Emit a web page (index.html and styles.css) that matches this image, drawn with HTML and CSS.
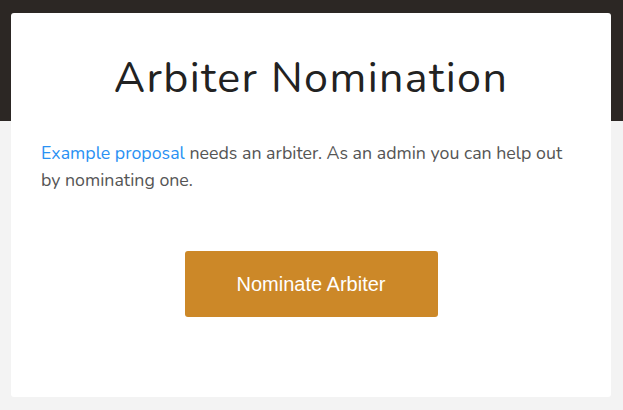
FILE: index.html
```html
<!DOCTYPE html>
<html>
<head>
<meta charset="utf-8">
<link rel="stylesheet" href="styles.css">
</head>
<body>
<div class="card">
  <h1 class="title">Arbiter Nomination</h1>
  <p class="text"><a class="link" href="#">Example proposal</a> needs an arbiter. As an admin you can help out by nominating one.</p>
  <div class="actions">
    <button class="btn">Nominate Arbiter</button>
  </div>
</div>
</body>
</html>
```
FILE: styles.css
```css
html, body {
  margin: 0;
  padding: 0;
}
body {
  width: 623px;
  height: 410px;
  overflow: hidden;
  background: linear-gradient(to bottom, #2c2724 0, #2c2724 121px, #f3f3f3 121px, #f3f3f3 100%);
  font-family: "Nunito", "Lato", "Open Sans", sans-serif;
}
.card {
  margin: 13px 12px 0 11px;
  height: 384px;
  box-sizing: border-box;
  background: #fff;
  border-radius: 3px;
  padding: 0 30px;
}
.title {
  margin: 0;
  padding-top: 40px;
  font-size: 43px;
  line-height: 50px;
  font-weight: 400;
  letter-spacing: 1.4px;
  color: #222;
  text-align: center;
}
.text {
  margin: 37px 0 0 0;
  font-size: 17.8px;
  line-height: 27px;
  color: #555;
}
.link {
  color: #2a91f3;
  text-decoration: none;
}
.actions {
  display: flex;
  justify-content: center;
  margin-top: 57px;
}
.btn {
  width: 253px;
  height: 66px;
  border: none;
  border-radius: 3px;
  background: #cc8828;
  color: #fff;
  font-family: "Liberation Sans", Arial, sans-serif;
  font-size: 20px;
  padding: 0;
}
```
